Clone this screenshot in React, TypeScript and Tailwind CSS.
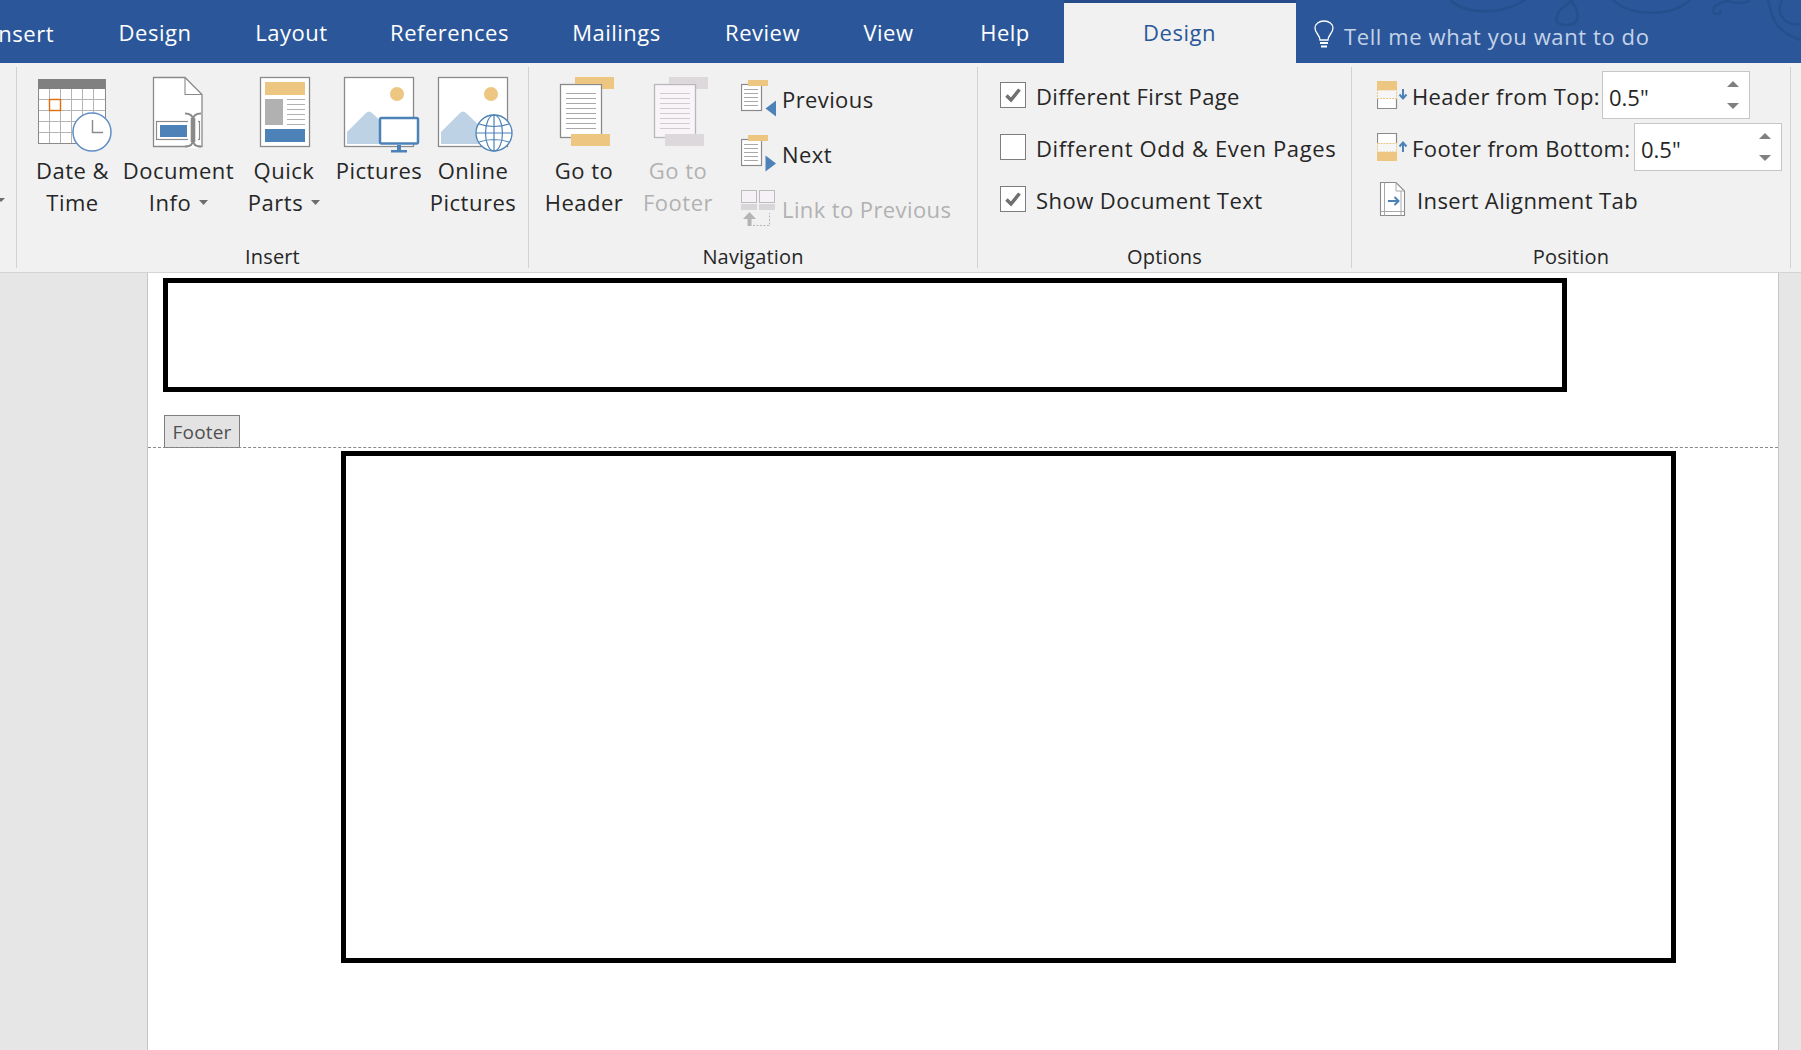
import React from 'react';

const BLUE = '#4d82b8';
const GOLD = '#edc681';

const tabs: [string, string][] = [
	['Design', 'w-[136px]'],
	['Layout', 'w-[137px]'],
	['References', 'w-[179px]'],
	['Mailings', 'w-[155px]'],
	['Review', 'w-[137px]'],
	['View', 'w-[115px]'],
	['Help', 'w-[118px]'],
];

// all big icons use page coordinates in their viewBox
function DateIcon() {
	return (
		<svg width="85" height="80" viewBox="30 76 85 80">
			<rect x="38.5" y="79.5" width="67" height="64" fill="#fff" stroke="#8a8a8a" />
			{[49.5, 60.5, 71.5, 82.5, 93.5].map((x) => (
				<path key={x} d={`M${x} 89V143`} stroke="#b4b4b4" />
			))}
			{[99.5, 110.5, 121.5, 132.5].map((y) => (
				<path key={y} d={`M39 ${y}H105`} stroke="#b4b4b4" />
			))}
			<rect x="38" y="79" width="67.5" height="10" fill="#808080" />
			<rect x="49.5" y="99.5" width="11" height="11" fill="#fff" stroke="#e36c0a" strokeWidth="1.4" />
			<circle cx="92" cy="132" r="19" fill="#fff" stroke="#5f8fc4" strokeWidth="1.5" />
			<path d="M92.5 120V132.5H103" fill="none" stroke="#8a8a8a" strokeWidth="1.4" />
		</svg>
	);
}

function DocInfoIcon() {
	return (
		<svg width="127" height="80" viewBox="115 76 127 80">
			<path d="M153.5 77.5H185L202 94.5V146.5H153.5Z" fill="#fff" stroke="#8a8a8a" strokeWidth="1.3" />
			<path d="M185 77.5V94.5H202" fill="none" stroke="#8a8a8a" strokeWidth="1.1" />
			<rect x="156.5" y="121.5" width="43" height="18" fill="#fff" stroke="#8a8a8a" strokeWidth="1.2" />
			<rect x="160" y="125" width="27" height="12" fill={BLUE} />
			<rect x="188" y="112" width="10" height="36" fill="#fff" />
			<path d="M185 113.5C190 113.5 193 116 193 120V140C193 144 190 146.5 185 146.5M201 113.5C196 113.5 193 116 193 120M201 146.5C196 146.5 193 144 193 140" fill="none" stroke="#8a8a8a" strokeWidth="2" />
			<rect x="190.7" y="118" width="4.6" height="24" fill="#8a8a8a" />
		</svg>
	);
}

function QuickPartsIcon() {
	return (
		<svg width="84" height="80" viewBox="242 76 84 80">
			<rect x="260.5" y="77.5" width="49" height="69" fill="#fff" stroke="#8a8a8a" strokeWidth="1.3" />
			<rect x="265" y="82" width="40" height="13" fill={GOLD} />
			<rect x="265" y="99" width="18" height="26" fill="#b1b1b1" />
			{[99.5, 104.5, 109.5, 114.5, 119.5, 124.5].map((y) => (
				<path key={y} d={`M287 ${y}H305`} stroke="#b1b1b1" />
			))}
			<rect x="265" y="129" width="40" height="13" fill={BLUE} />
		</svg>
	);
}

function PicturesIcon() {
	return (
		<svg width="106" height="80" viewBox="326 76 106 80">
			<rect x="344.5" y="77.5" width="69" height="69" fill="#fff" stroke="#8a8a8a" strokeWidth="1.3" />
			<circle cx="397" cy="94" r="7" fill={GOLD} />
			<path d="M347 132L366 113Q369 110 372 113L385 125V144H347Z" fill="#bed2e6" />
			<rect x="380" y="118" width="38" height="25.5" rx="1.5" fill="#fff" stroke={BLUE} strokeWidth="2.5" />
			<rect x="397" y="145" width="4" height="5" fill={BLUE} />
			<rect x="391" y="150" width="16" height="2.5" fill={BLUE} />
		</svg>
	);
}

function OnlinePicturesIcon() {
	return (
		<svg width="82" height="80" viewBox="432 76 82 80">
			<rect x="438.5" y="77.5" width="69" height="69" fill="#fff" stroke="#8a8a8a" strokeWidth="1.3" />
			<circle cx="491" cy="94" r="7" fill={GOLD} />
			<path d="M441 132L460 113Q463 110 466 113L482 128V144H441Z" fill="#bed2e6" />
			<circle cx="494" cy="133" r="18" fill="#fff" stroke={BLUE} strokeWidth="1.3" />
			<ellipse cx="494" cy="133" rx="8.5" ry="18" fill="none" stroke={BLUE} strokeWidth="1.2" />
			<path d="M494 115V151M476 133H512M479 124Q494 129 509 124M479 142Q494 137 509 142" fill="none" stroke={BLUE} strokeWidth="1.2" />
		</svg>
	);
}

function GoToIcon({ off, disabled }: { off: number; disabled?: boolean }) {
	const tag = disabled ? '#dcd8db' : GOLD;
	const line = disabled ? '#cfcbcf' : '#a8a8a8';
	return (
		<svg width={off ? 108 : 80} height="80" viewBox={off ? '624 76 108 80' : '544 76 80 80'}>
			<g transform={`translate(${off} 0)`}>
				<rect x="575" y="77" width="39" height="12" fill={tag} />
				<rect x="560.5" y="84.5" width="41" height="53" fill={disabled ? '#f8f4f8' : '#fff'} stroke={disabled ? '#bab6ba' : '#8a8a8a'} strokeWidth="1.3" />
				<rect x="575" y="77" width="27" height="7" fill={tag} />
				{[93.5, 98.5, 103.5, 108.5, 113.5, 118.5, 123.5, 128.5].map((y) => (
					<path key={y} d={`M566 ${y}H596`} stroke={line} />
				))}
				<rect x="571" y="134" width="39" height="12" fill={tag} />
			</g>
		</svg>
	);
}

function SmallSheet({ dy }: { dy: number }) {
	return (
		<g transform={`translate(0 ${dy})`}>
			<rect x="741.5" y="84.5" width="20" height="26" fill="#fff" stroke="#8a8a8a" strokeWidth="1.2" />
			<rect x="748" y="80" width="20" height="6" fill={GOLD} />
			{[89.5, 93.5, 97.5, 101.5, 105.5].map((y) => (
				<path key={y} d={`M744 ${y}H758`} stroke="#a8a8a8" />
			))}
		</g>
	);
}

function PreviousIcon() {
	return (
		<svg width="35" height="55" viewBox="741 73 35 55" className="shrink-0">
			<SmallSheet dy={0} />
			<path d="M765.500 108.500L776 100.500V116.500Z" fill={BLUE} />
		</svg>
	);
}

function NextIcon() {
	return (
		<svg width="35" height="55" viewBox="741 128 35 55" className="shrink-0">
			<SmallSheet dy={55} />
			<path d="M776 163.500L765.500 155.500V171.500Z" fill={BLUE} />
		</svg>
	);
}

function LinkIcon() {
	return (
		<svg width="35" height="55" viewBox="741 183 35 55" className="shrink-0">
			<rect x="741.5" y="190.5" width="15" height="12" fill="#f5f1f6" stroke="#bcbcbc" />
			<rect x="759.5" y="190.5" width="15" height="12" fill="#f5f1f6" stroke="#bcbcbc" />
			<rect x="741" y="204" width="16" height="6" fill="#d9d6d9" />
			<rect x="759" y="204" width="16" height="6" fill="#d9d6d9" />
			<path d="M749.5 212L756 219H751.500V226H747.500V219H743Z" fill="#b4b4b4" />
			<path d="M753 225.5H769.5V213" fill="none" stroke="#b4b4b4" strokeDasharray="2 1.5" />
		</svg>
	);
}

function HeaderTopIcon() {
	return (
		<svg width="35" height="48" viewBox="1377 71 35 48" className="shrink-0">
			<path d="M1377.5 98V108.5H1396.5V98" fill="#fff" stroke="#8a8a8a" strokeWidth="1.2" />
			<rect x="1377" y="81" width="20" height="9" fill={GOLD} />
			<rect x="1377.5" y="90" width="19" height="8.5" fill="#f6f6f6" stroke={GOLD} strokeDasharray="2 1" />
			<path d="M1403 89V98M1399.5 94.5L1403 98.5L1406.5 94.5" fill="none" stroke={BLUE} strokeWidth="2" />
		</svg>
	);
}

function FooterBottomIcon() {
	return (
		<svg width="35" height="48" viewBox="1377 123 35 48" className="shrink-0">
			<path d="M1377.5 143V133.5H1396.5V143" fill="#fff" stroke="#8a8a8a" strokeWidth="1.2" />
			<rect x="1377.5" y="143.5" width="19" height="8.5" fill="#f6f6f6" stroke={GOLD} strokeDasharray="2 1" />
			<rect x="1377" y="152" width="20" height="9" fill={GOLD} />
			<path d="M1403 152V143M1399.5 146.5L1403 142.5L1406.5 146.5" fill="none" stroke={BLUE} strokeWidth="2" />
		</svg>
	);
}

function AlignTabIcon() {
	return (
		<svg width="40" height="50" viewBox="1377 176 40 50" className="shrink-0">
			<path d="M1380.5 182.5H1396L1404.5 191V215.5H1380.5Z" fill="#fff" stroke="#8a8a8a" strokeWidth="1.1" />
			<path d="M1396 182.5V191H1404.5M1384.5 182.5V215.5M1401 191V215.5M1380.5 211.5H1404.5" fill="none" stroke="#a8a8a8" />
			<path d="M1388 201H1398.5M1394.5 197L1398.5 201L1394.5 205" fill="none" stroke={BLUE} strokeWidth="2" />
		</svg>
	);
}

function Caret() {
	return (
		<svg width="9" height="5" viewBox="0 0 9 5" className="inline-block ml-[8px] mb-[5px]">
			<path d="M0 0H9L4.5 5Z" fill="#6d6d6d" />
		</svg>
	);
}

function BigButton({ width, icon, children }: { width: string; icon: React.ReactNode; children: React.ReactNode }) {
	return (
		<div className={`${width} flex flex-col items-center`}>
			{icon}
			<div className="leading-[32px] text-center whitespace-nowrap tracking-[0.5px] -mt-[2px]">{children}</div>
		</div>
	);
}

function Group({ width, label, children }: { width: string; label: string; children: React.ReactNode }) {
	return (
		<div className={`${width} flex flex-col shrink-0`}>
			<div className="flex-1">{children}</div>
			<div className="h-[32px] leading-[34px] text-center text-[20px] tracking-[0.15px]">{label}</div>
		</div>
	);
}

function Sep() {
	return <div className="w-px my-[4px] bg-[#d2d2d2] shrink-0" />;
}

function Check({ checked, label, track }: { checked?: boolean; label: string; track: string }) {
	return (
		<div className="h-[52px] flex items-center gap-[10px]">
			<div className="w-[26px] h-[26px] border-[1.5px] border-[#7d7d7d] bg-white flex items-center justify-center">
				{checked && (
					<svg width="18" height="16" viewBox="0 0 18 16">
						<path d="M2.5 8.5L7 13L15.5 2.5" fill="none" stroke="#707070" strokeWidth="3.5" />
					</svg>
				)}
			</div>
			<span className={`${track} whitespace-nowrap mt-[3px]`}>{label}</span>
		</div>
	);
}

function Spinner() {
	return (
		<div className="w-[148px] h-[48px] bg-white border-[1.5px] border-[#c6c6c6] flex items-center justify-between pl-[6px] pr-[10px]">
			<span className="mt-[4px] tracking-normal">0.5"</span>
			<div className="flex flex-col gap-[16px]">
				<svg width="12" height="6" viewBox="0 0 12 6"><path d="M0 6H12L6 0Z" fill="#808080" /></svg>
				<svg width="12" height="6" viewBox="0 0 12 6"><path d="M0 0H12L6 6Z" fill="#808080" /></svg>
			</div>
		</div>
	);
}

export default function App() {
	return (
		<div className="w-[1801px] h-[1050px] overflow-hidden flex flex-col bg-white font-['Open_Sans',sans-serif] text-[22px] text-[#262626]">
			{/* Tab strip */}
			<div className="relative h-[63px] flex bg-[#2b579a] text-white tracking-[0.5px] shrink-0 overflow-hidden">
				<div className="w-[87px] flex justify-end items-center pr-[33px] overflow-hidden">
					<span className="mt-[3px]">Insert</span>
				</div>
				{tabs.map(([name, width]) => (
					<div key={name} className={`${width} text-center leading-[65px]`}>
						{name}
					</div>
				))}
				<div className="w-[232px] bg-[#264d8a] pt-[3px]">
					<div className="h-full bg-[#f1f1f1] text-[#2b579a] text-center leading-[59px] pr-px">Design</div>
				</div>
				<div className="flex items-center pl-[18px] gap-[10px] text-[#c5d3e8] tracking-[0.6px]">
					<svg width="20" height="28" viewBox="0 0 20 28" className="mt-[5px]">
						<path d="M6 20C6 15 1 13 1 8C1 4 5 1 10 1C15 1 19 4 19 8C19 13 14 15 14 20Z" fill="none" stroke="#fff" strokeWidth="1.3" />
						<path d="M6 23H14M7 26.5H13" stroke="#fff" strokeWidth="1.8" />
					</svg>
					<span className="mt-[9px]">Tell me what you want to do</span>
				</div>
				{/* swirl decoration */}
				<svg width="401" height="63" viewBox="1400 0 401 63" className="absolute right-0 top-0">
					<g fill="none" stroke="#24508e" strokeWidth="2.5">
						<path d="M1450 0C1465 14 1500 16 1525 0" />
						<path d="M1574 0C1558 8 1548 24 1565 25C1582 26 1580 10 1570 0" />
						<path d="M1613 0C1630 16 1670 18 1690 0" />
						<path d="M1730 0C1722 2 1712 6 1713 11C1715 16 1722 14 1720 10" />
						<path d="M1768 0C1772 18 1775 32 1801 40" />
						<path d="M1782 0C1775 14 1785 26 1801 24" />
						<path d="M1750 0C1745 4 1732 4 1728 0" />
					</g>
				</svg>
			</div>

			{/* Ribbon */}
			<div className="h-[210px] flex bg-[#f1f1f1] border-b border-[#d4d4d4] shrink-0">
				<div className="w-[16px] flex flex-col shrink-0">
					<svg width="5" height="5" viewBox="0 0 5 5" className="mt-[135px]">
						<path d="M-3 0H5L1 4Z" fill="#6d6d6d" />
					</svg>
				</div>
				<Sep />
				<Group width="w-[511px]" label="Insert">
					<div className="flex pl-[13px] pt-[13px]">
						<BigButton width="w-[85px]" icon={<DateIcon />}>
							Date &amp;<br />Time
						</BigButton>
						<BigButton width="w-[127px]" icon={<DocInfoIcon />}>
							Document<br />Info<Caret />
						</BigButton>
						<BigButton width="w-[84px]" icon={<QuickPartsIcon />}>
							Quick<br />Parts<Caret />
						</BigButton>
						<BigButton width="w-[106px]" icon={<PicturesIcon />}>
							Pictures
						</BigButton>
						<BigButton width="w-[82px]" icon={<OnlinePicturesIcon />}>
							Online<br />Pictures
						</BigButton>
					</div>
				</Group>
				<Sep />
				<Group width="w-[448px]" label="Navigation">
					<div className="flex pl-[15px]">
						<div className="pt-[13px]">
							<BigButton width="w-[80px]" icon={<GoToIcon off={0} />}>
								Go to<br />Header
							</BigButton>
						</div>
						<div className="pt-[13px] text-[#b1b1b1]">
							<BigButton width="w-[108px]" icon={<GoToIcon off={94} disabled />}>
								Go to<br />Footer
							</BigButton>
						</div>
						<div className="pl-[9px] pt-[10px] flex flex-col tracking-[0.4px]">
							<div className="h-[55px] flex items-center gap-[6px]">
								<PreviousIcon />
								<span className="-mt-[2px]">Previous</span>
							</div>
							<div className="h-[55px] flex items-center gap-[6px]">
								<NextIcon />
								<span className="-mt-[2px]">Next</span>
							</div>
							<div className="h-[55px] flex items-center gap-[6px] text-[#b1b1b1]">
								<LinkIcon />
								<span className="whitespace-nowrap -mt-[2px]">Link to Previous</span>
							</div>
						</div>
					</div>
				</Group>
				<Sep />
				<Group width="w-[373px]" label="Options">
					<div className="pl-[22px] pt-[6px]">
						<Check checked label="Different First Page" track="tracking-[0.35px]" />
						<Check label="Different Odd & Even Pages" track="tracking-[0.65px]" />
						<Check checked label="Show Document Text" track="tracking-[0.45px]" />
					</div>
				</Group>
				<Sep />
				<Group width="w-[438px]" label="Position">
					<div className="pl-[25px] pt-[8px] flex flex-col gap-[4px] tracking-[0.4px]">
						<div className="flex items-center">
							<HeaderTopIcon />
							<span className="w-[190px] whitespace-nowrap mt-[3px]">Header from Top:</span>
							<Spinner />
						</div>
						<div className="flex items-center">
							<FooterBottomIcon />
							<span className="w-[222px] whitespace-nowrap mt-[3px]">Footer from Bottom:</span>
							<Spinner />
						</div>
						<div className="h-[50px] mt-px flex items-center">
							<AlignTabIcon />
							<span className="-mt-px">Insert Alignment Tab</span>
						</div>
					</div>
				</Group>
				<Sep />
			</div>

			{/* Document */}
			<div className="flex-1 flex min-h-0">
				<div className="w-[148px] bg-[#e6e6e6] border-r border-[#c6c6c6] shrink-0" />
				<div className="flex-1 bg-white flex flex-col">
					<div className="ml-[15px] mt-[5px] w-[1404px] h-[114px] border-[5px] border-black" />
					<div className="ml-[16px] mt-[23px] w-[76px] h-[33px] bg-[#e3e3e3] border border-[#7f7f7f] text-[#505050] text-[19px] tracking-[0.15px] leading-[33px] text-center">
						Footer
					</div>
					<div className="-mt-px border-t border-dashed border-[#8a8a8a]" />
					<div className="ml-[193px] mt-[3px] w-[1335px] h-[512px] border-[5px] border-black" />
				</div>
				<div className="w-[23px] bg-[#e6e6e6] border-l border-[#c6c6c6] shrink-0" />
			</div>
		</div>
	);
}
